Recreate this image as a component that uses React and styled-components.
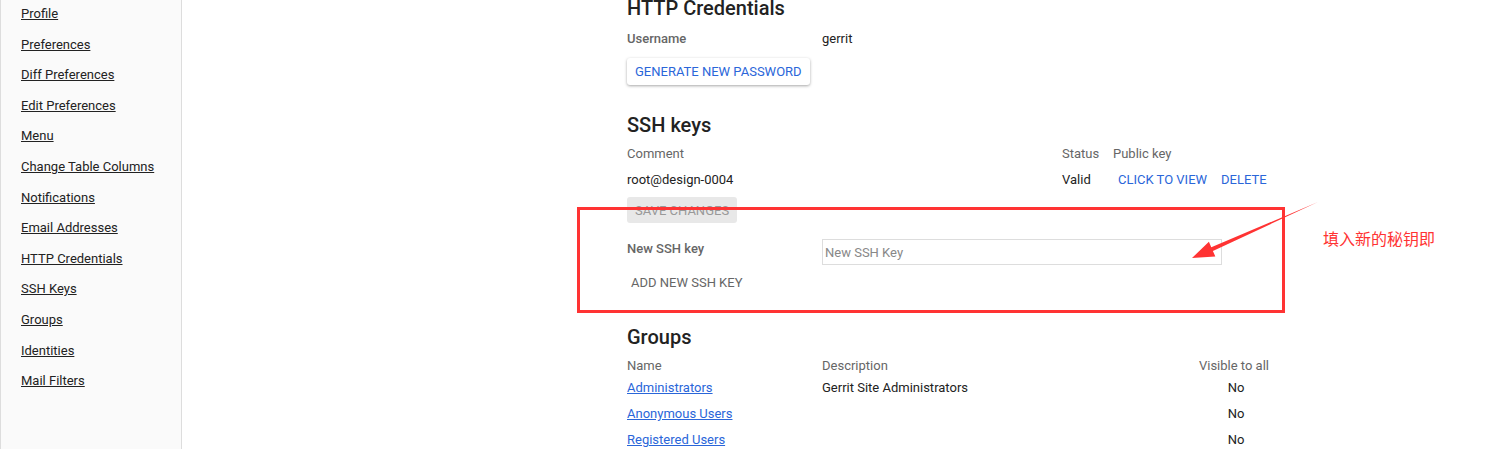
import React from 'react';
import styled, { createGlobalStyle } from 'styled-components';

const GlobalStyle = createGlobalStyle`
body {
  margin: 0;
  font-family: Roboto, "Noto Sans", "Noto Sans CJK SC", sans-serif;
  font-size: 13px;
  color: #222;
  background: #fff;
  overflow: hidden;
}
`;

const Page = styled.div`
position: relative;
display: flex;
min-height: 100vh;
`;

const Sidebar = styled.nav`
width: 180px;
flex-shrink: 0;
background-color: #fafafa;
border-left: 1px solid #ddd;
border-right: 1px solid #ddd;
padding-top: 4px;
`;

const NavList = styled.ul`
list-style: none;
margin: 0;
padding: 0 0 0 20px;
`;

const NavItem = styled.li`
line-height: 20px;
margin-bottom: 10.6px;
a {
  color: #222;
  text-decoration: underline;
}
`;

const Main = styled.main`
width: 642px;
margin-left: 445px;
margin-top: -6px;
`;

const Heading = styled.h2`
margin: ${p => p.$top || 0}px 0 0 0;
font-size: 20px;
line-height: 28px;
font-weight: 500;
color: #222;
`;

const InfoRow = styled.div`
display: grid;
grid-template-columns: 195px 1fr;
line-height: 20px;
margin-top: 7px;
`;

const Label = styled.span`
color: #666;
font-weight: ${p => (p.$bold ? 500 : 400)};
`;

const RaisedButton = styled.button`
margin-top: 9px;
height: 27px;
padding: 0 8px;
border: 0;
border-radius: 3px;
background: #fff;
color: #2a66d9;
font-family: inherit;
font-size: 13px;
text-transform: uppercase;
box-shadow: 0 1px 3px rgba(0, 0, 0, 0.35);
`;

const KeyTable = styled.div`
display: grid;
grid-template-columns: 435px 51px 1fr;
margin-top: 2px;
`;

const Cell = styled.div`
height: 26px;
line-height: 26px;
color: ${p => (p.$head ? '#666' : '#222')};
white-space: nowrap;
`;

const LinkButton = styled.button`
border: 0;
background: none;
padding: 0 5px;
margin-right: 4px;
font-family: inherit;
font-size: 13px;
color: #2a66d9;
text-transform: uppercase;
`;

const FlatButton = styled.button`
margin-top: 4px;
height: 26px;
padding: 0 8px;
border: 0;
border-radius: 3px;
background: #e8e8e8;
color: #999;
font-family: inherit;
font-size: 13px;
text-transform: uppercase;
`;

const NewKeyRow = styled.div`
display: grid;
grid-template-columns: 195px 400px;
align-items: start;
margin-top: 16px;
`;

const NewKeyLabel = styled(Label)`
line-height: 20px;
`;

const KeyInput = styled.input`
box-sizing: border-box;
width: 400px;
height: 26px;
padding: 0 2px;
border: 1px solid #ddd;
font-family: inherit;
font-size: 13px;
&::placeholder {
  color: #888;
}
`;

const AddButton = styled.button`
display: block;
margin-top: 4px;
height: 26px;
padding: 0 4px;
border: 0;
background: none;
color: #666;
font-family: inherit;
font-size: 13px;
text-transform: uppercase;
`;

const GroupTable = styled.div`
display: grid;
grid-template-columns: 195px 1fr 72px;
margin-top: 5px;
`;

const GroupHead = styled.div`
height: 20px;
line-height: 20px;
color: #666;
text-align: ${p => p.$align || 'left'};
`;

const GroupCell = styled.div`
height: 26px;
line-height: 24px;
text-align: ${p => p.$align || 'left'};
padding-left: ${p => (p.$align === 'center' ? '6px' : 0)};
a {
  color: #2a66d9;
  text-decoration: underline;
}
`;

const Highlight = styled.div`
position: absolute;
left: 577px;
top: 207px;
width: 702px;
height: 100px;
border: 3px solid #f33;
pointer-events: none;
`;

const Arrow = styled.svg`
position: absolute;
left: 0;
top: 0;
pointer-events: none;
`;

const Note = styled.div`
position: absolute;
left: 1323px;
top: 227px;
font-family: "Noto Sans CJK SC", sans-serif;
font-size: 16px;
line-height: 22px;
color: #f33;
`;

const navItems = [
  'Profile', 'Preferences', 'Diff Preferences', 'Edit Preferences', 'Menu',
  'Change Table Columns', 'Notifications', 'Email Addresses', 'HTTP Credentials',
  'SSH Keys', 'Groups', 'Identities', 'Mail Filters',
];

const groups = [
  { name: 'Administrators', desc: 'Gerrit Site Administrators', visible: 'No' },
  { name: 'Anonymous Users', desc: '', visible: 'No' },
  { name: 'Registered Users', desc: '', visible: 'No' },
];

const App = () => {
  return (
    <Page>
      <GlobalStyle />
      <Sidebar>
        <NavList>
          {navItems.map(item => (
            <NavItem key={item}><a href="#">{item}</a></NavItem>
          ))}
        </NavList>
      </Sidebar>

      <Main>
        <Heading>HTTP Credentials</Heading>
        <InfoRow>
          <Label $bold>Username</Label>
          <span>gerrit</span>
        </InfoRow>
        <RaisedButton>Generate new password</RaisedButton>

        <Heading $top={26}>SSH keys</Heading>
        <KeyTable>
          <Cell $head>Comment</Cell>
          <Cell $head>Status</Cell>
          <Cell $head>Public key</Cell>
          <Cell>root@design-0004</Cell>
          <Cell>Valid</Cell>
          <Cell>
            <LinkButton>Click to view</LinkButton>
            <LinkButton>Delete</LinkButton>
          </Cell>
        </KeyTable>
        <FlatButton disabled>Save changes</FlatButton>
        <NewKeyRow>
          <NewKeyLabel $bold>New SSH key</NewKeyLabel>
          <KeyInput placeholder="New SSH Key" />
        </NewKeyRow>
        <AddButton>Add new SSH key</AddButton>

        <Heading $top={28}>Groups</Heading>
        <GroupTable>
          <GroupHead>Name</GroupHead>
          <GroupHead>Description</GroupHead>
          <GroupHead $align="right">Visible to all</GroupHead>
          {groups.map(g => (
            <React.Fragment key={g.name}>
              <GroupCell><a href="#">{g.name}</a></GroupCell>
              <GroupCell>{g.desc}</GroupCell>
              <GroupCell $align="center">{g.visible}</GroupCell>
            </React.Fragment>
          ))}
        </GroupTable>
      </Main>

      <Highlight />
      <Arrow width="1495" height="449">
        <polygon
          fill="#f33"
          points="1192,258 1208.9,241.8 1211.3,247.3 1318,202 1212.9,250.9 1215.3,256.4"
        />
      </Arrow>
      <Note>填入新的秘钥即</Note>
    </Page>
  );
};

export default App;
